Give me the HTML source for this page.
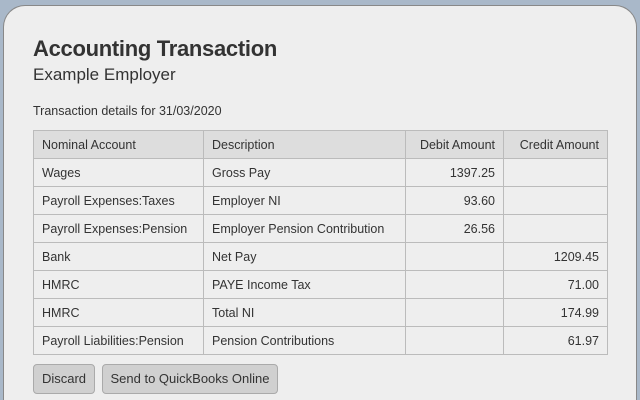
<!DOCTYPE html>
<html style="width:640px;height:400px;overflow:hidden"><head><style>
*{box-sizing:border-box;margin:0;padding:0}
body{width:640px;height:400px;background:#a9b8c9;font-family:"Liberation Sans",sans-serif;color:#333;overflow:hidden;position:relative}
.card{position:absolute;left:3px;top:5px;width:634px;height:395px;background:#eee;border:1px solid #888;border-bottom:none;border-radius:22px 22px 0 0}
h1{position:absolute;left:33px;top:36px;font-size:22px;font-weight:bold;color:#333;letter-spacing:-0.3px}
h2{position:absolute;left:33px;top:65px;font-size:17px;font-weight:normal;color:#333}
.d{position:absolute;left:33px;top:104px;font-size:12.5px}
table{position:absolute;left:33px;top:130px;border-collapse:collapse;font-size:12.5px;table-layout:fixed;width:574px}
td,th{border:1px solid #bbb;height:28px;padding:0 8px;font-weight:normal;text-align:left;white-space:nowrap;overflow:hidden}
th{background:#ddd}
.r{text-align:right}
th.r{text-align:right}
.b{position:absolute;top:364px;height:30px;background:#d0d0d0;border:1px solid #aaa;border-radius:4px;font-size:13px;line-height:28px;text-align:center}
</style></head><body>
<div class="card"></div>
<h1>Accounting Transaction</h1>
<h2>Example Employer</h2>
<div class="d">Transaction details for 31/03/2020</div>
<table>
<colgroup><col style="width:170px"><col style="width:202px"><col style="width:98px"><col style="width:104px"></colgroup>
<tr><th>Nominal Account</th><th>Description</th><th class="r">Debit Amount</th><th class="r">Credit Amount</th></tr>
<tr><td>Wages</td><td>Gross Pay</td><td class="r">1397.25</td><td></td></tr>
<tr><td>Payroll Expenses:Taxes</td><td>Employer NI</td><td class="r">93.60</td><td></td></tr>
<tr><td>Payroll Expenses:Pension</td><td>Employer Pension Contribution</td><td class="r">26.56</td><td></td></tr>
<tr><td>Bank</td><td>Net Pay</td><td></td><td class="r">1209.45</td></tr>
<tr><td>HMRC</td><td>PAYE Income Tax</td><td></td><td class="r">71.00</td></tr>
<tr><td>HMRC</td><td>Total NI</td><td></td><td class="r">174.99</td></tr>
<tr><td>Payroll Liabilities:Pension</td><td>Pension Contributions</td><td></td><td class="r">61.97</td></tr>
</table>
<div class="b" style="left:33px;width:62px">Discard</div>
<div class="b" style="left:102px;width:176px">Send to QuickBooks Online</div>
</body></html>
